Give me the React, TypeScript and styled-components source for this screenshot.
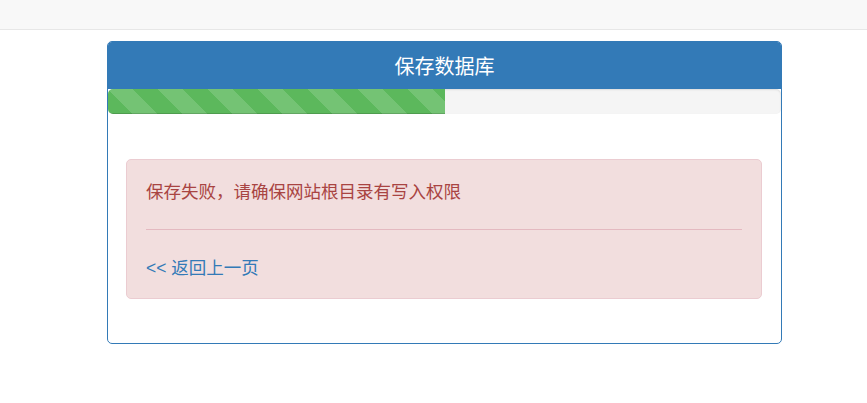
import React from 'react'
import styled, { createGlobalStyle } from 'styled-components'

// Bootstrap-3 style "save database" panel, rendered at ~125% scale.

const GlobalStyle = createGlobalStyle`
  html, body {
    margin: 0;
    padding: 0;
    background: #ffffff;
    font-family: "Liberation Sans", "Noto Sans CJK SC", sans-serif;
  }
`

const TopBar = styled.div`
  height: 29px;
  background: #f8f8f8;
  border-bottom: 1px solid #e7e7e7;
`

const Container = styled.div`
  padding: 11px 0 0 107px;
`

const Panel = styled.div`
  width: 673px;
  border: 1px solid #337ab7;
  border-radius: 5px;
  overflow: hidden;
`

const Heading = styled.div`
  height: 47px;
  background: #337ab7;
  display: flex;
  align-items: center;
  justify-content: center;

  h3 {
    margin: 0;
    font-size: 20px;
    font-weight: 400;
    color: #ffffff;
    font-family: "Noto Sans CJK SC", sans-serif;
  }
`

const Progress = styled.div`
  height: 25px;
  background: #f5f5f5;
  border-radius: 5px;
  overflow: hidden;
  box-shadow: inset 0 1px 2px rgba(0, 0, 0, 0.1);
`

const Bar = styled.div`
  height: 100%;
  background-color: #5cb85c;
  background-image: linear-gradient(
    45deg,
    rgba(255, 255, 255, 0.15) 25%,
    transparent 25%,
    transparent 50%,
    rgba(255, 255, 255, 0.15) 50%,
    rgba(255, 255, 255, 0.15) 75%,
    transparent 75%,
    transparent
  );
  background-size: 50px 50px;
  box-shadow: inset 0 -1px 0 rgba(0, 0, 0, 0.15);
`

const Body = styled.div`
  padding: 45px 19px 44px 18px;
`

const Alert = styled.div`
  background: #f2dede;
  border: 1px solid #ebccd1;
  border-radius: 5px;
  padding: 19px 19px 18px;
  color: #a94442;
  font-size: 17.5px;
  line-height: 24px;
  font-family: "Noto Sans CJK SC", sans-serif;

  p {
    margin: 0;
  }

  hr {
    margin: 26px 0 25px;
    border: 0;
    border-top: 1px solid #e4b9c0;
  }
`

const BackLink = styled.a`
  color: #337ab7;
  text-decoration: none;
  font-family: "Liberation Sans", "Noto Sans CJK SC", sans-serif;
`

const App = () => {
  const percent = 50

  return (
    <>
      <GlobalStyle />
      <TopBar />
      <Container>
        <Panel>
          <Heading>
            <h3>保存数据库</h3>
          </Heading>
          <Progress>
            <Bar style={{ width: `${percent}%` }} />
          </Progress>
          <Body>
            <Alert>
              <p>保存失败，请确保网站根目录有写入权限</p>
              <hr />
              <BackLink href="#">&lt;&lt; 返回上一页</BackLink>
            </Alert>
          </Body>
        </Panel>
      </Container>
    </>
  )
}

export default App
